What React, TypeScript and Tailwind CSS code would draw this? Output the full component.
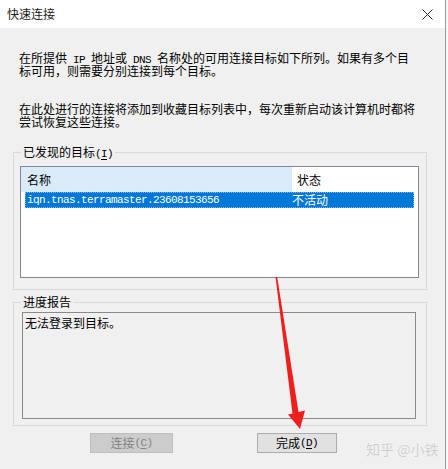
import React from "react";

const cjk = "font-['Noto_Sans_CJK_SC',sans-serif]";
const mono = "font-['Liberation_Mono',monospace] text-[11px] tracking-[-0.6px]";

const Asc = ({ children }: { children: React.ReactNode }) => (
  <span className={`${mono} leading-[10px]`}>{children}</span>
);

const Hotkey = ({ k }: { k: string }) => (
  <span className={`${mono} leading-[10px]`}>
    (<span className="underline underline-offset-2">{k}</span>)
  </span>
);

const Line = ({ children }: { children: React.ReactNode }) => (
  <div className="flex h-[13px] items-center whitespace-nowrap leading-[13px]">
    <span>{children}</span>
  </div>
);

const Arrow = () => (
  <svg
    className="pointer-events-none absolute left-0 top-0"
    width={448}
    height={469}
    viewBox="0 0 448 469"
  >
    <polygon
      points="275.5,277 277.2,277 298.5,412 305,410.5 300,429 288,414.5 292.5,413.5"
      fill="#ee1f1c"
    />
  </svg>
);

export default function App() {
  return (
    <div
      className={`relative flex h-[469px] w-[448px] overflow-hidden bg-[#f0f0f0] text-[12px] text-black ${cjk}`}
    >
      <div className="flex w-[445px] flex-col">
        {/* title bar */}
        <div className="flex h-[28px] items-center justify-between bg-white pl-[7px] pr-[12px]">
          <span className="leading-[12px] text-[#1a1a1a]">快速连接</span>
          <svg width={11} height={11} viewBox="0 0 11 11">
            <path d="M0.5 0.5L10.5 10.5M10.5 0.5L0.5 10.5" stroke="#222" strokeWidth={1} />
          </svg>
        </div>

        <div className="flex flex-col pl-[13px] pt-[23px]">
          <div className="flex flex-col pl-[6px]">
            <Line>
              在所提供<Asc> IP </Asc>地址或<Asc> DNS </Asc>名称处的可用连接目标如下所列。如果有多个目
            </Line>
            <Line>标可用，则需要分别连接到每个目标。</Line>
          </div>
          <div className="mt-[25px] flex flex-col pl-[6px]">
            <Line>在此处进行的连接将添加到收藏目标列表中，每次重新启动该计算机时都将</Line>
            <Line>尝试恢复这些连接。</Line>
          </div>

          {/* discovered targets */}
          <fieldset className="mt-[18px] w-[414px] border border-[#d9d9d9] px-[6px] pb-[11px] pt-[7px]">
            <legend className="ml-[1px] px-[2px] leading-[12px]">
              已发现的目标<Hotkey k="I" />
            </legend>
            <div className="flex h-[112px] w-[399px] flex-col border border-[#828790] bg-white">
              <div className="flex h-[25px] items-center">
                <div className="flex h-full w-[271px] items-center bg-[#d9ebf9] pl-[6px]">名称</div>
                <div className="pl-[5px]">状态</div>
              </div>
              <div className="mx-[4px] flex h-[16px] items-center border border-dotted border-[#7fb5e8] bg-[#0078d7] text-white">
                <span className={`w-[266px] pl-[1px] ${mono}`}>iqn.tnas.terramaster.23608153656</span>
                <span>不活动</span>
              </div>
            </div>
          </fieldset>

          {/* progress report */}
          <fieldset className="mt-[6px] w-[414px] border border-[#d9d9d9] px-[8px] pb-[6px] pt-[4px]">
            <legend className="ml-[-1px] px-[2px] leading-[12px]">进度报告</legend>
            <div className="h-[107px] w-[394px] border border-[#8a8a8a] bg-[#f0f0f0] px-[2px] pt-[3px] leading-[14px]">
              无法登录到目标。
            </div>
          </fieldset>

          {/* buttons */}
          <div className="mt-[7px] flex">
            <div className="ml-[77px] flex h-[20px] w-[83px] items-center justify-center border border-[#bfbfbf] bg-[#cccccc] text-[#838383]">
              连接<Hotkey k="C" />
            </div>
            <div className="ml-[84px] flex h-[20px] w-[80px] items-center justify-center border border-[#adadad] bg-[#e1e1e1]">
              完成<Hotkey k="D" />
            </div>
          </div>
        </div>
      </div>
      <div className="w-[1px] bg-[#9a9a9a]" />
      <div className="w-[2px] bg-[#f7f7f7]" />

      <span className="absolute left-[366px] top-[441px] text-[14px] leading-[16px] text-[#cfcfcf] [text-shadow:0_0_1px_#fff]">
        知乎 @小铁
      </span>
      <Arrow />
    </div>
  );
}
